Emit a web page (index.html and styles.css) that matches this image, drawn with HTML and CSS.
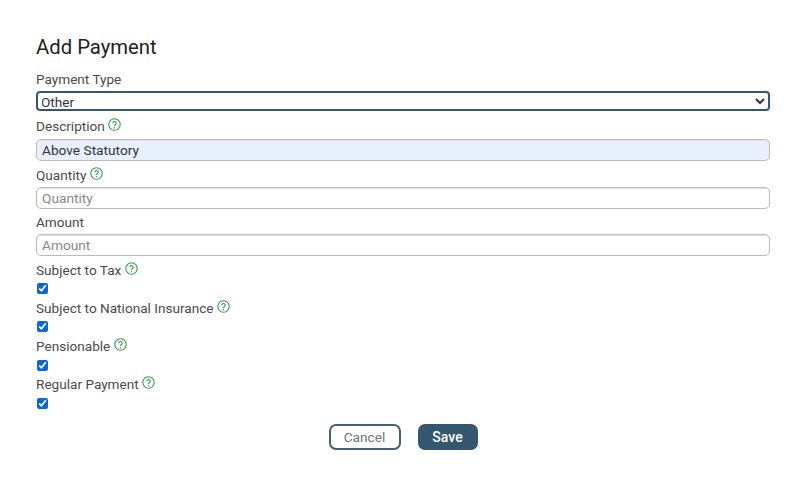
FILE: index.html
```html
<!DOCTYPE html>
<html lang="en">
<head>
    <meta charset="UTF-8">
    <meta name="viewport" content="width=device-width, initial-scale=1.0">
    <title>Add Payment</title>
    <link rel="stylesheet" href="styles.css">
</head>
<body>

    <!-- Help icon used next to the labels -->
    <svg class="icon-defs" width="0" height="0">
        <symbol id="help" viewBox="0 0 13 13">
            <circle cx="6.5" cy="6.5" r="5.7" fill="none" stroke="currentColor" stroke-width="1.1"/>
            <path d="M4.8 5.2a1.7 1.7 0 1 1 2.7 1.4c-.7.4-1 .8-1 1.4" fill="none" stroke="currentColor" stroke-width="1.1"/>
            <circle cx="6.5" cy="9.7" r=".7" fill="currentColor"/>
        </symbol>
    </svg>

    <form class="payment-form">
        <h2>Add Payment</h2>

        <div class="field field-type">
            <label for="type">Payment Type</label>
            <select id="type">
                <option>Other</option>
            </select>
        </div>

        <div class="field field-description">
            <label for="description">Description <svg class="help"><use href="#help"/></svg></label>
            <input id="description" class="filled" type="text" value="Above Statutory">
        </div>

        <div class="field field-quantity">
            <label for="quantity">Quantity <svg class="help"><use href="#help"/></svg></label>
            <input id="quantity" type="text" placeholder="Quantity">
        </div>

        <div class="field field-amount">
            <label for="amount">Amount</label>
            <input id="amount" type="text" placeholder="Amount">
        </div>

        <div class="check">
            <label for="tax">Subject to Tax <svg class="help"><use href="#help"/></svg></label>
            <input id="tax" type="checkbox" checked>
        </div>

        <div class="check">
            <label for="ni">Subject to National Insurance <svg class="help"><use href="#help"/></svg></label>
            <input id="ni" type="checkbox" checked>
        </div>

        <div class="check check-low">
            <label for="pension">Pensionable <svg class="help"><use href="#help"/></svg></label>
            <input id="pension" type="checkbox" checked>
        </div>

        <div class="check check-low">
            <label for="regular">Regular Payment <svg class="help"><use href="#help"/></svg></label>
            <input id="regular" type="checkbox" checked>
        </div>

        <div class="buttons">
            <button type="button" class="btn-cancel">Cancel</button>
            <button type="button" class="btn-save">Save</button>
        </div>
    </form>

</body>
</html>
```

FILE: styles.css
```css
* {
    margin: 0;
    padding: 0;
    box-sizing: border-box;
}
body {
    font-family: Roboto, Arial, sans-serif;
    font-size: 13.6px;
    color: #333;
    background: white;
}
.icon-defs {
    display: block;
}
.payment-form {
    padding: 35px 30px 0 36px;
}
h2 {
    font-size: 20.3px;
    font-weight: 400;
    line-height: 24px;
    color: #222;
    margin-bottom: 11px;
}
label {
    display: block;
    line-height: 19px;
    color: #4a4a4a;
}
.help {
    width: 13px;
    height: 13px;
    color: #3a9a48;
}
/* Text fields and select */
.field label {
    margin-bottom: 2px;
}
.field-type {
    margin-bottom: 7px;
}
.field-type label {
    margin-bottom: 3px;
}
.field-description {
    margin-bottom: 5px;
}
.field-description label {
    margin-bottom: 3px;
}
.field-quantity {
    margin-bottom: 4px;
}
.field-quantity input {
    height: 21px;
}
.field-amount {
    margin-bottom: 5px;
}
input[type="text"] {
    display: block;
    width: 100%;
    height: 22px;
    padding: 0 5px;
    font: inherit;
    font-size: 13.7px;
    color: #333;
    background: white;
    border: 1px solid #bbb;
    border-radius: 5px;
    box-shadow: inset 0 1px 1px #e4e4e4;
}
input::placeholder {
    color: #888;
}
input.filled {
    background: #e8f0fe;
}
/* select is drawn focused, the outer ring is a shadow */
select {
    display: block;
    width: calc(100% - 2px);
    height: 18px;
    margin: 0 1px;
    text-indent: -1px;
    font: inherit;
    color: #333;
    background: white;
    border: 1px solid #34566f;
    border-radius: 3px;
    box-shadow: 0 0 0 1px #34566f;
}
/* Checkboxes */
.check {
    height: 38px;
}
.check input {
    display: block;
    width: 11px;
    height: 11px;
    margin: 3px 0 0 1px;
    accent-color: #0b66d8;
}
.check-low input {
    margin-top: 4px;
}
.buttons {
    display: flex;
    justify-content: center;
    gap: 17px;
    margin-top: 11px;
}
.btn-cancel, .btn-save {
    height: 26px;
    font: inherit;
    font-size: 13.7px;
    border-radius: 7px;
    cursor: pointer;
}
.btn-cancel {
    width: 72px;
    color: #6c757d;
    background: white;
    border: 2px solid #465f72;
}
.btn-save {
    width: 60px;
    color: white;
    font-size: 14px;
    font-weight: 500;
    background: #34566f;
    border: none;
}
```
